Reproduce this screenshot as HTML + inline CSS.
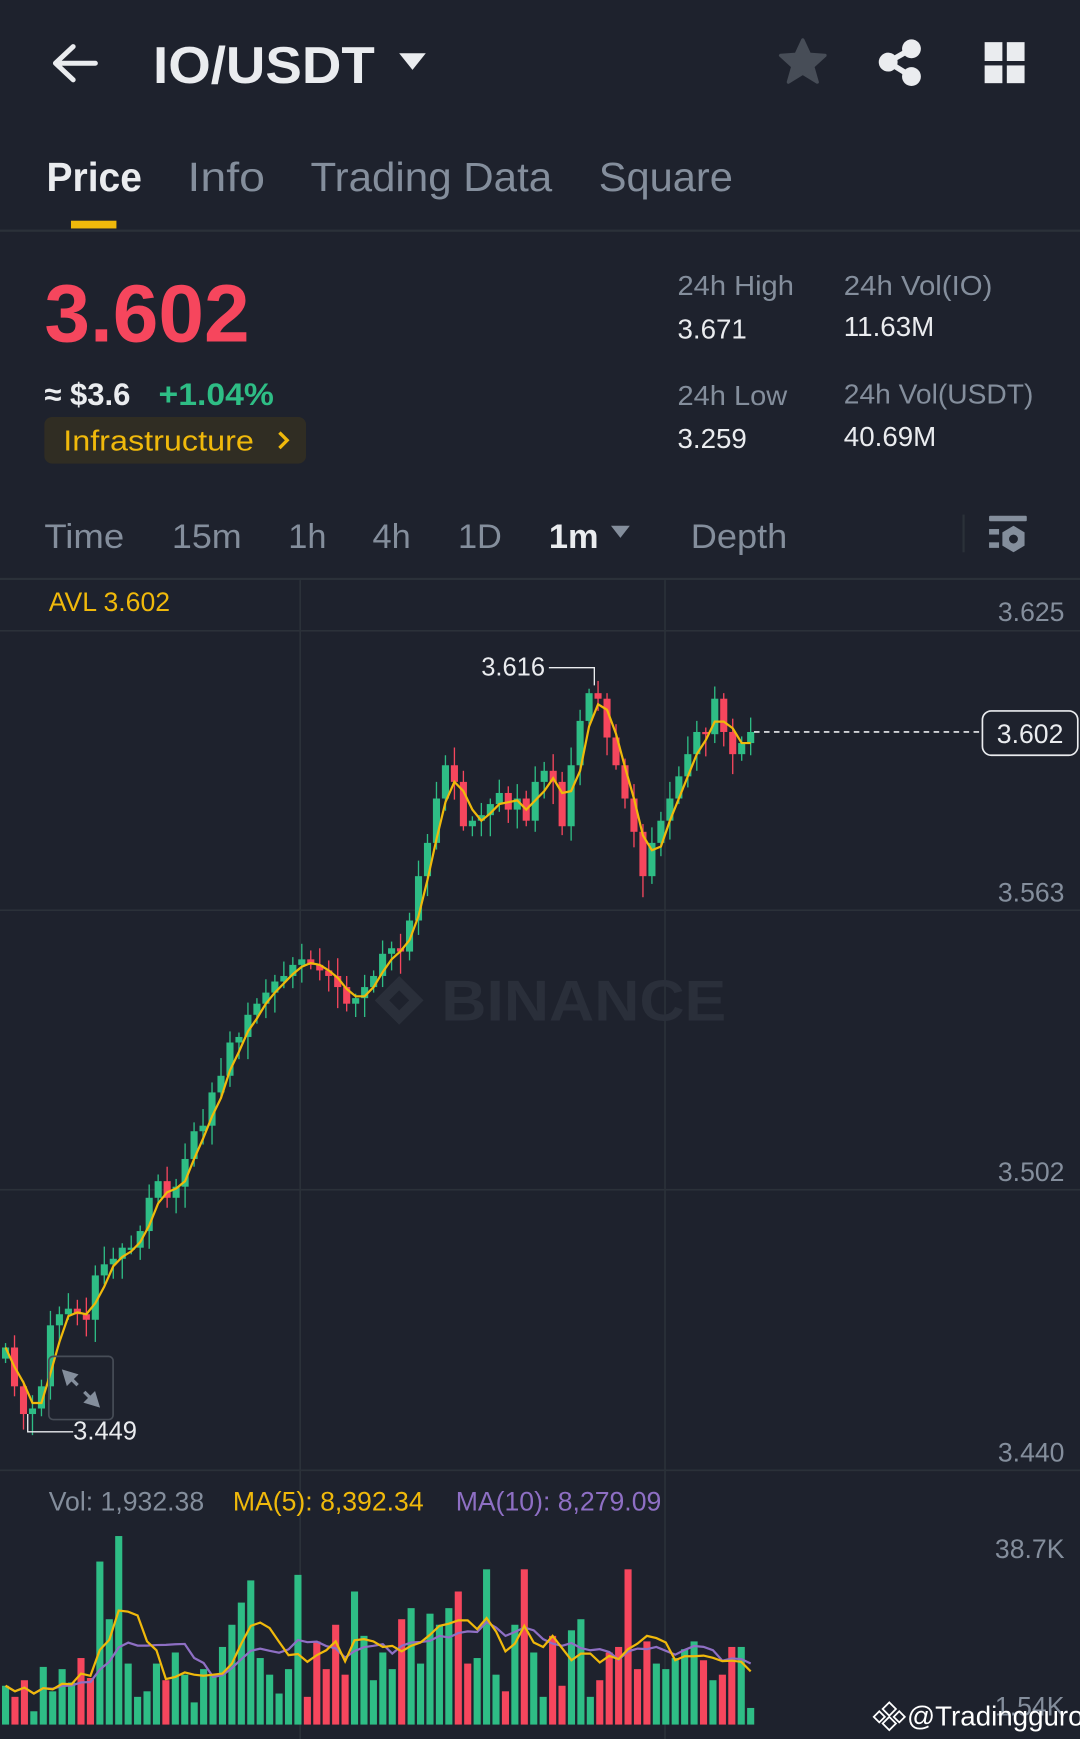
<!DOCTYPE html>
<html><head><meta charset="utf-8"><style>
html,body{margin:0;padding:0;background:#1e222d;width:1080px;height:1739px;overflow:hidden}
svg{display:block}
text{font-family:"Liberation Sans",sans-serif}
</style></head><body>
<svg id="s" width="1080" height="1739" viewBox="0 0 974 1568" preserveAspectRatio="none" xmlns="http://www.w3.org/2000/svg">
<rect width="974" height="1568" fill="#1e222d"/>
<!-- header -->
<path d="M86 57H52M66 42L50 57L66 72" stroke="#eaecef" stroke-width="4.5" fill="none" stroke-linecap="round" stroke-linejoin="round"/>
<text x="138" y="75" font-size="47" font-weight="bold" fill="#eaecef" textLength="200" lengthAdjust="spacingAndGlyphs">IO/USDT</text>
<path d="M360 48H384L372 63Z" fill="#eaecef"/>
<path d="M724 36L730 49L744 50L733 60L737 74L724 66L711 74L715 60L704 50L718 49Z" fill="#474d57" stroke="#474d57" stroke-width="3" stroke-linejoin="round"/>
<g fill="#eaecef"><circle cx="822" cy="44" r="8.5"/><circle cx="801" cy="56" r="8.5"/><circle cx="822" cy="69" r="8.5"/></g>
<path d="M822 44L801 56L822 69" stroke="#eaecef" stroke-width="5" fill="none"/>
<g fill="#eaecef"><rect x="888" y="38" width="16" height="17"/><rect x="908" y="38" width="16" height="17"/><rect x="888" y="59" width="16" height="16"/><rect x="908" y="59" width="16" height="16"/></g>
<!-- tabs -->
<text x="42" y="172" font-size="37" font-weight="bold" fill="#eaecef" textLength="86" lengthAdjust="spacingAndGlyphs">Price</text>
<text x="169" y="172" font-size="37" fill="#848e9c" textLength="70" lengthAdjust="spacingAndGlyphs">Info</text>
<text x="280" y="172" font-size="37" fill="#848e9c" textLength="218" lengthAdjust="spacingAndGlyphs">Trading Data</text>
<text x="540" y="172" font-size="37" fill="#848e9c" textLength="121" lengthAdjust="spacingAndGlyphs">Square</text>
<rect x="64" y="199" width="41" height="7" fill="#f0b90b"/>
<rect x="0" y="207" width="974" height="2" fill="#2b3139"/>
<!-- price -->
<text x="40" y="308" font-size="74" font-weight="bold" fill="#f6465d">3.602</text>
<text x="40" y="365" font-size="28" font-weight="bold" fill="#eaecef">≈ $3.6</text>
<text x="143" y="365" font-size="28" font-weight="bold" fill="#2ebd85" textLength="104" lengthAdjust="spacingAndGlyphs">+1.04%</text>
<rect x="40" y="376" width="236" height="42" rx="7" fill="#302d23"/>
<text x="57" y="406" font-size="26" fill="#f0b90b" textLength="172" lengthAdjust="spacingAndGlyphs">Infrastructure</text>
<path d="M252 390L259 397L252 404" stroke="#f0b90b" stroke-width="3" fill="none"/>
<g font-size="25">
<text x="611" y="266" fill="#848e9c" textLength="105" lengthAdjust="spacingAndGlyphs">24h High</text>
<text x="761" y="266" fill="#848e9c" textLength="134" lengthAdjust="spacingAndGlyphs">24h Vol(IO)</text>
<text x="611" y="305" fill="#eaecef">3.671</text>
<text x="761" y="303" fill="#eaecef">11.63M</text>
<text x="611" y="365" fill="#848e9c" textLength="99" lengthAdjust="spacingAndGlyphs">24h Low</text>
<text x="761" y="364" fill="#848e9c" textLength="171" lengthAdjust="spacingAndGlyphs">24h Vol(USDT)</text>
<text x="611" y="404" fill="#eaecef">3.259</text>
<text x="761" y="402" fill="#eaecef">40.69M</text>
</g>
<!-- intervals -->
<g font-size="31" fill="#848e9c">
<text x="40" y="494" textLength="72" lengthAdjust="spacingAndGlyphs">Time</text><text x="155" y="494" textLength="63" lengthAdjust="spacingAndGlyphs">15m</text><text x="260" y="494">1h</text><text x="336" y="494">4h</text><text x="413" y="494">1D</text><text x="623" y="494" textLength="87" lengthAdjust="spacingAndGlyphs">Depth</text>
</g>
<text x="495" y="494" font-size="31" font-weight="bold" fill="#eaecef">1m</text>
<path d="M551 474H568L559.5 485Z" fill="#848e9c"/>
<rect x="868" y="464" width="2" height="34" fill="#2b3139"/>
<g fill="#848e9c"><rect x="892" y="465" width="34" height="5" rx="1"/><rect x="892" y="477" width="9" height="5"/><rect x="892" y="489" width="9" height="5"/><path d="M914 474L924 480V492L914 498L904 492V480Z"/></g>
<circle cx="914" cy="486" r="4" fill="#1e222d"/>
<rect x="0" y="521" width="974" height="2" fill="#2b3139"/>
<!-- grid -->
<g fill="#2b3139"><rect x="0" y="568" width="974" height="1.5"/><rect x="0" y="820" width="974" height="1.5"/><rect x="0" y="1072" width="974" height="1.5"/><rect x="0" y="1325" width="974" height="1.5"/><rect x="270" y="523" width="1.5" height="1045"/><rect x="599" y="523" width="1.5" height="1045"/></g>
<text x="44" y="551" font-size="24" fill="#f0b90b">AVL 3.602</text>
<g font-size="24" fill="#848e9c" text-anchor="end"><text x="960" y="560">3.625</text><text x="960" y="813">3.563</text><text x="960" y="1065">3.502</text><text x="960" y="1318">3.440</text><text x="960" y="1405">38.7K</text><text x="960" y="1547">1.54K</text></g>
<!-- watermark -->
<g fill="#2a2f3a"><path d="M360 880L382 902L360 924L338 902Z M360 893L369 902L360 911L351 902Z" fill-rule="evenodd"/><text x="398" y="920" font-size="52" font-weight="bold" textLength="257" lengthAdjust="spacingAndGlyphs">BINANCE</text></g>
<g id="candles"></g>
<g id="vols"></g>
<!-- labels -->
<text x="434" y="609" font-size="23" fill="#eaecef">3.616</text>
<path d="M495 602H536V618" stroke="#eaecef" stroke-width="1.2" fill="none"/>
<path d="M25 1275V1291H66" stroke="#eaecef" stroke-width="1.2" fill="none"/>
<text x="66" y="1298" font-size="23" fill="#eaecef">3.449</text>
<path d="M680 660H884" stroke="#eaecef" stroke-width="1.5" stroke-dasharray="5 4"/>
<rect x="886" y="641" width="86" height="40" rx="8" fill="#1e222d" stroke="#eaecef" stroke-width="1.5"/>
<text x="929" y="670" font-size="24" fill="#eaecef" text-anchor="middle">3.602</text>
<rect x="44" y="1223" width="58" height="57" rx="4" fill="none" stroke="#474d57" stroke-width="1.5"/>
<path d="M58 1237L68 1240L61 1247Z M88 1267L78 1264L85 1257Z M62 1241L70 1249 M84 1263L76 1255" stroke="#848e9c" stroke-width="3" fill="#848e9c"/>
<g font-size="24"><text x="44" y="1362" fill="#848e9c">Vol: 1,932.38</text><text x="210" y="1362" fill="#f0b90b">MA(5): 8,392.34</text><text x="411" y="1362" fill="#8e6fc4">MA(10): 8,279.09</text></g>
<g id="wm"><path d="M802 1535L808 1541L802 1547L796 1541Z M802 1548L808 1554L802 1560L796 1554Z M793 1543L798 1548L793 1553L788 1548Z M811 1543L816 1548L811 1553L806 1548Z" fill="none" stroke="#fff" stroke-width="1.6"/><text x="818" y="1556" font-size="25" fill="#fff">@Tradingguro</text></g>
</svg>
<script>
var C=[1215,1250,1275,1270,1250,1195,1185,1180,1185,1190,1150,1140,1135,1125,1125,1110,1080,1065,1080,1070,1045,1020,1015,985,970,940,935,915,905,895,885,880,870,865,870,875,880,890,905,900,890,880,860,855,858,830,790,760,720,690,705,745,740,735,725,715,730,720,740,705,695,705,745,690,650,625,630,665,690,720,750,790,760,740,720,700,680,660,662,630,660,680,670,660];
var V=[35,25,40,12,52,30,50,38,60,42,147,95,170,55,25,30,55,40,65,45,20,50,45,70,90,110,130,60,45,28,50,135,25,75,50,90,45,120,80,40,65,50,95,105,55,100,90,105,120,55,60,140,45,30,90,140,65,25,80,35,85,95,25,40,65,70,140,50,75,55,50,60,68,75,58,40,45,70,70,15];
var ns="http://www.w3.org/2000/svg",cg=document.getElementById('candles'),vg=document.getElementById('vols');
function el(t,a,p){var e=document.createElementNS(ns,t);for(var k in a)e.setAttribute(k,a[k]);p.appendChild(e);return e;}
var n=C.length,dx=(677-5)/(n-1),ma=[];
for(var i=0;i<n;i++){var x=5+i*dx,o=i?C[i-1]:C[0]+10,c=C[i];var up=c<=o,col=up?'#2ebd85':'#f6465d';
var hi=Math.min(o,c)-4-(i*7%13),lo=Math.max(o,c)+4+(i*5%17);
el('rect',{x:x-0.6,y:hi,width:1.2,height:lo-hi,fill:col},cg);
el('rect',{x:x-3.2,y:Math.min(o,c),width:6.4,height:Math.max(2,Math.abs(c-o)),fill:col},cg);
var s=0,m=0;for(var j=Math.max(0,i-2);j<=Math.min(n-1,i);j++){s+=C[j];m++;}ma.push((5+i*dx)+','+(s/m));}
el('polyline',{points:ma.join(' '),fill:'none',stroke:'#f0b90b','stroke-width':2},cg);
var base=1555,m5=[],m10=[],vn=V.length,vdx=(677-5)/(vn-1);
for(var i=0;i<vn;i++){var x=5+i*vdx,ci=Math.round(i*(n-1)/(vn-1));var up=ci==0||C[ci]<=C[ci-1];
el('rect',{x:x-3.2,y:base-V[i],width:6.4,height:V[i],fill:up?'#2ebd85':'#f6465d'},vg);
var a=0,b=0,ca=0,cb=0;for(var j=Math.max(0,i-4);j<=i;j++){a+=V[j];ca++;}for(var j=Math.max(0,i-9);j<=i;j++){b+=V[j];cb++;}
m5.push(x+','+(base-a/ca));m10.push(x+','+(base-b/cb));}
el('polyline',{points:m10.join(' '),fill:'none',stroke:'#8e6fc4','stroke-width':2},vg);
el('polyline',{points:m5.join(' '),fill:'none',stroke:'#f0b90b','stroke-width':2},vg);
</script>
</body></html>
